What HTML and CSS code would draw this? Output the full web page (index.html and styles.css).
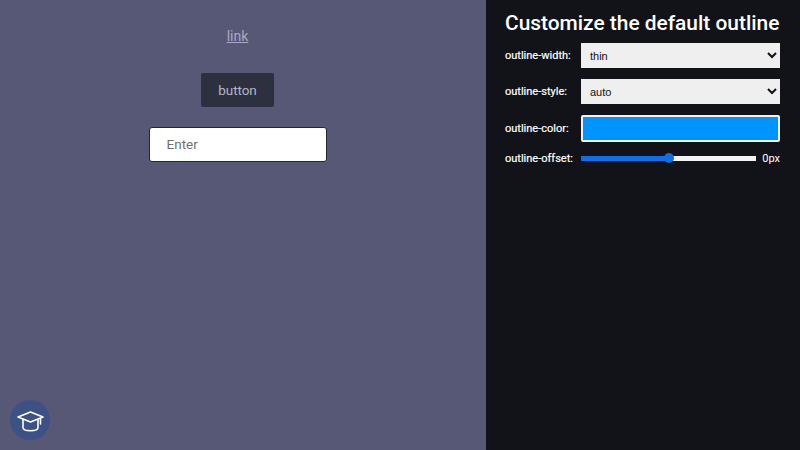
FILE: index.html
```html
<!DOCTYPE html>
<html lang="en">
<head>
<meta charset="utf-8">
<title>Customize the default outline</title>
<link rel="stylesheet" href="styles.css">
</head>
<body>
<main class="demo">
  <a class="demo-link" href="#">link</a>
  <button class="demo-button" type="button">button</button>
  <input class="demo-input" type="text" placeholder="Enter">
  <div class="badge">
    <svg viewBox="0 0 28 24" width="28" height="24" fill="none" stroke="#fff" stroke-width="1.6" stroke-linejoin="round" stroke-linecap="round">
      <path d="M14.5 4 L27 9 L14.5 14 L2 9 Z"/>
      <path d="M7 11.5 V19.5 C7 21.5 10.5 22.8 14.5 22.8 C18.5 22.8 22 21.5 22 19.5 V11.5"/>
      <path d="M24.5 10.5 V16"/>
    </svg>
  </div>
</main>
<aside class="panel">
  <h1 class="title">Customize the default outline</h1>
  <div class="rows">
    <label class="row row-select">
      <span class="label">outline-width:</span>
      <select class="control select"><option>thin</option><option>medium</option><option>thick</option></select>
    </label>
    <label class="row row-select">
      <span class="label">outline-style:</span>
      <select class="control select"><option>auto</option><option>solid</option><option>dashed</option></select>
    </label>
    <label class="row row-color">
      <span class="label">outline-color:</span>
      <span class="control swatch"></span>
    </label>
    <label class="row row-range">
      <span class="label">outline-offset:</span>
      <input class="range" type="range" min="-10" max="10" value="0">
      <span class="value">0px</span>
    </label>
  </div>
</aside>
</body>
</html>
```
FILE: styles.css
```css
* { box-sizing: border-box; }
html, body { height: 100%; }
body {
  margin: 0;
  display: grid;
  grid-template-columns: 486px 314px;
  height: 450px;
  overflow: hidden;
  font-family: Roboto, sans-serif;
}
.demo {
  position: relative;
  background: #575776;
  display: flex;
  flex-direction: column;
  align-items: center;
  padding: 26px 11px 0 0;
}
.demo-link {
  color: #a9a9c4;
  font-size: 14px;
  line-height: 20px;
  text-decoration: underline;
}
.demo-button {
  margin-top: 27px;
  width: 73px;
  height: 34px;
  background: #2c303f;
  color: #b4b6c4;
  border: 0;
  border-radius: 2px;
  font: 13.5px Roboto, sans-serif;
  letter-spacing: -0.1px;
}
.demo-input {
  margin-top: 20px;
  width: 178px;
  height: 35px;
  padding: 0 17px 2px;
  background: #fff;
  border: 1px solid #23253a;
  border-radius: 3px;
  font: 13.5px Roboto, sans-serif;
}
.demo-input::placeholder { color: #6f6f6f; opacity: 1; }
.badge {
  position: absolute;
  left: 10px;
  bottom: 10px;
  width: 40px;
  height: 40px;
  border-radius: 50%;
  background: #3c5287;
  display: flex;
  align-items: center;
  justify-content: center;
}
.panel {
  background: #111318;
  color: #fff;
  padding: 8px 20px 0 19px;
}
.title {
  margin: 0;
  font-size: 20.9px;
  line-height: 30px;
  font-weight: 500;
  white-space: nowrap;
}
.rows {
  margin-top: 5px;
  display: flex;
  flex-direction: column;
}
.row {
  display: flex;
  align-items: center;
}
.row-select { height: 25px; margin-bottom: 11px; }
.row-color { height: 27px; margin-bottom: 6px; }
.row-range { height: 20px; }
.label {
  width: 76px;
  flex: none;
  font-size: 11px;
  white-space: nowrap;
  -webkit-text-stroke: 0.2px #fff;
}
.control { flex: none; width: 199px; }
.select {
  height: 25px;
  padding: 0 5px;
  background-color: #efefef;
  border: 0;
  border-radius: 0;
  color: #111;
  font: 11px "Liberation Sans", sans-serif;
}
.swatch {
  display: block;
  height: 27px;
  background: #0094ff;
  border: 2px solid #f2f2f2;
  border-radius: 2px;
}
.range {
  flex: none;
  width: 175px;
  height: 10px;
  margin: 0;
  appearance: none;
  background: linear-gradient(to right, #0f6fe8 50%, #f2f2f2 50%);
  background-size: 100% 5px;
  background-position: center;
  background-repeat: no-repeat;
  border-radius: 3px;
}
.range::-webkit-slider-thumb {
  appearance: none;
  width: 10px;
  height: 10px;
  border-radius: 50%;
  background: #0f6fe8;
}
.value {
  margin-left: auto;
  font-size: 11px;
}
```
